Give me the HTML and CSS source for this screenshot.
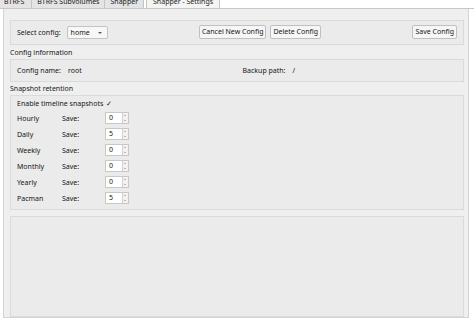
FILE: index.html
```html
<!DOCTYPE html>
<html lang="en">
<head>
    <meta charset="UTF-8">
    <title>Snapper - Settings</title>
    <link rel="stylesheet" href="styles.css">
</head>
<body>
    <div class="tabs">
        <div class="tab">BTRFS</div>
        <div class="tab">BTRFS Subvolumes</div>
        <div class="tab">Snapper</div>
        <div class="tab active">Snapper - Settings</div>
    </div>
    <div class="pane">
        <div class="group toolbar">
            <span class="label">Select config:</span>
            <div class="combo">home <span class="caret"></span></div>
            <div class="spacer"></div>
            <button class="btn">Cancel New Config</button>
            <button class="btn">Delete Config</button>
            <div class="spacer"></div>
            <button class="btn">Save Config</button>
        </div>

        <div class="title">Config information</div>
        <div class="group info">
            <div class="info-half"><span>Config name:</span><span>root</span></div>
            <div class="info-half backup"><span>Backup path:</span><span>/</span></div>
        </div>

        <div class="title">Snapshot retention</div>
        <div class="group retention">
            <div class="enable">Enable timeline snapshots <span class="check">&#10003;</span></div>
            <div class="rows">
                <span>Hourly</span><span>Save:</span><div class="spin"><span class="val">0</span><span class="arrows"></span></div>
                <span>Daily</span><span>Save:</span><div class="spin"><span class="val">5</span><span class="arrows"></span></div>
                <span>Weekly</span><span>Save:</span><div class="spin"><span class="val">0</span><span class="arrows"></span></div>
                <span>Monthly</span><span>Save:</span><div class="spin"><span class="val">0</span><span class="arrows"></span></div>
                <span>Yearly</span><span>Save:</span><div class="spin"><span class="val">0</span><span class="arrows"></span></div>
                <span>Pacman</span><span>Save:</span><div class="spin"><span class="val">5</span><span class="arrows"></span></div>
            </div>
        </div>

        <div class="group empty"></div>
    </div>
</body>
</html>
```

FILE: styles.css
```css
body {
    margin: 0;
    width: 474px;
    height: 321px;
    overflow: hidden;
    background: #ffffff;
    font-family: 'Noto Sans', sans-serif;
    font-size: 7px;
    color: #161616;
}
.tabs {
    display: flex;
    align-items: flex-end;
    height: 8px;
    overflow: hidden;
    border-bottom: 1px solid #c8c8c8;
    background: #ffffff;
}
.tab {
    padding: 0 5px 1px 5px;
    line-height: 10px;
    background: #e4e4e4;
    border-right: 1px solid #c4c4c4;
    color: #222;
}
.tab:first-child {
    padding-left: 4px;
    padding-right: 7px;
}
.tab.active {
    background: #f4f4f4;
    padding: 0 6px 2px 6px;
    margin-bottom: -1px;
    margin-left: 2px;
    border-left: 1px solid #c4c4c4;
}
.pane {
    margin: 0 5px 3px 3px;
    height: 309px;
    box-sizing: border-box;
    border: 1px solid #d4d4d4;
    border-top: none;
    background: #efefef;
    padding: 11px 4px 0 6px;
    display: flex;
    flex-direction: column;
}
.group {
    border: 1px solid #dadada;
    background: #ebebeb;
    box-sizing: border-box;
}
.toolbar {
    height: 25px;
    display: flex;
    align-items: center;
    padding: 0 6px;
}
.label {
    margin-right: 6px;
}
.combo {
    width: 41px;
    height: 13px;
    box-sizing: border-box;
    border: 1px solid #c4c4c4;
    border-radius: 2px;
    background: #f7f7f7;
    padding-left: 3px;
    line-height: 11px;
    position: relative;
}
.caret {
    position: absolute;
    right: 5px;
    top: 5px;
    border-left: 2px solid transparent;
    border-right: 2px solid transparent;
    border-top: 2px solid #555;
}
.spacer {
    flex: 1;
}
.btn {
    font: inherit;
    color: #161616;
    height: 14px;
    padding: 0 2px;
    margin-left: 4px;
    border: 1px solid #c0c0c0;
    border-radius: 2px;
    background: #f6f6f6;
    line-height: 12px;
}
.title {
    height: 13px;
    line-height: 14px;
    margin-top: 1px;
}
.info + .title {
    margin-top: 0;
}
.info {
    height: 24px;
    display: flex;
    align-items: center;
    padding: 0 6px;
}
.info-half {
    flex: 1;
    display: flex;
    gap: 7px;
}
.backup {
    padding-left: 11px;
}
.retention {
    height: 116px;
    padding: 2px 6px 0 6px;
}
.enable {
    height: 12px;
    line-height: 12px;
}
.check {
    margin-left: 1px;
}
.rows {
    display: grid;
    grid-template-columns: 45px 43px 24px;
    grid-auto-rows: 16px;
    align-items: center;
}
.spin {
    display: flex;
    height: 12px;
    box-sizing: border-box;
    border: 1px solid #c8c8c8;
    background: #ffffff;
}
.val {
    flex: 1;
    padding-left: 3px;
    line-height: 10px;
}
.arrows {
    width: 5px;
    border-left: 1px solid #d0d0d0;
    background: #f2f2f2;
    position: relative;
}
.arrows::before,
.arrows::after {
    content: "";
    position: absolute;
    left: 1px;
    border-left: 1.5px solid transparent;
    border-right: 1.5px solid transparent;
}
.arrows::before {
    top: 2px;
    border-bottom: 1.5px solid #777;
}
.arrows::after {
    bottom: 2px;
    border-top: 1.5px solid #777;
}
.empty {
    margin-top: 6px;
    height: 102px;
}
```
